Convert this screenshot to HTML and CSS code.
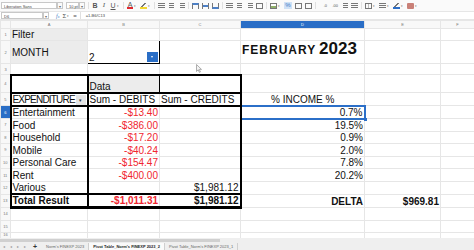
FILE: index.html
```html
<!DOCTYPE html>
<html lang="en">

<head>
  <meta charset="UTF-8">
  <title>Pivot Table_Norm's FINEXP 2023_2</title>
  <link rel="stylesheet" href="styles.css">
</head>

<body>
  <div class="app">
    <!-- toolbar -->
    <div class="toolbar">
      <span class="combo font-name">Liberation Sans</span><span class="dd">▾</span>
      <span class="combo font-size">10 pt</span><span class="dd">▾</span>
      <span class="sep"></span>
      <span class="tb-txt bold">B</span>
      <span class="tb-txt ital">I</span>
      <span class="tb-txt under">U</span><span class="arr">▾</span>
      <span class="sep"></span>
      <span class="tb-txt font-color">A</span><span class="arr">▾</span>
      <span class="ic ic-hl"></span><span class="arr">▾</span>
      <span class="sep"></span>
      <span class="ic ic-lines al-l"></span>
      <span class="ic ic-lines al-c"></span>
      <span class="ic ic-lines al-r"></span>
      <span class="sep"></span>
      <span class="ic ic-v v-t"></span>
      <span class="ic ic-v v-c"></span>
      <span class="ic ic-v v-b"></span>
      <span class="sep"></span>
      <span class="ic ic-lines"></span>
      <span class="ic ic-lines al-c"></span>
      <span class="ic ic-lines al-r"></span>
      <span class="ic ic-box"></span>
      <span class="sep"></span>
      <span class="ic ic-img"></span><span class="arr">▾</span>
      <span class="tb-txt pct">%</span>
      <span class="ic ic-box"></span>
      <span class="ic ic-box"></span>
      <span class="sep"></span>
      <span class="tb-txt num">.0</span>
      <span class="tb-txt num">.00</span>
      <span class="ic ic-lines al-r"></span>
      <span class="ic ic-lines"></span>
      <span class="sep"></span>
      <span class="ic ic-grid"></span><span class="arr">▾</span>
      <span class="ic ic-lines"></span><span class="arr">▾</span>
      <span class="ic ic-bc"></span><span class="arr">▾</span>
      <span class="ic ic-red"></span><span class="arr">▾</span>
    </div>

    <!-- formula bar -->
    <div class="formula-bar">
      <span class="combo name-box">D6</span><span class="dd">▾</span>
      <span class="fx">f<i>x</i></span>
      <span class="sigma">Σ</span><span class="arr">▾</span>
      <span class="eq">=</span>
      <span class="formula">=1-B6/C13</span>
    </div>

    <div class="grid-wrap">
      <table class="sheet">
        <colgroup>
          <col class="c-hd">
          <col class="c-a">
          <col class="c-b">
          <col class="c-c">
          <col class="c-d">
          <col class="c-e">
          <col class="c-f">
        </colgroup>
        <tr class="r-head">
          <th></th>
          <th>A</th>
          <th>B</th>
          <th>C</th>
          <th class="hd-sel">D</th>
          <th>E</th>
          <th>F</th>
        </tr>
        <tr class="r-1">
          <th>1</th>
          <td class="fill mid">Filter</td>
          <td></td><td></td><td></td><td></td><td></td>
        </tr>
        <tr class="r-2">
          <th>2</th>
          <td class="fill mid">MONTH</td>
          <td class="filter-box">2<span class="filter-btn"></span></td>
          <td></td>
          <td class="title"><b class="month">FEBRUARY</b> <b class="year">2023</b></td>
          <td></td><td></td>
        </tr>
        <tr class="r-3">
          <th>3</th>
          <td></td><td></td><td></td><td></td><td></td><td></td>
        </tr>
        <tr class="r-4">
          <th>4</th>
          <td class="pv-l pv-r pv-t pv-b"></td>
          <td class="fill pv-t pv-b line-r">Data</td>
          <td class="pv-r pv-t pv-b"></td>
          <td></td><td></td><td></td>
        </tr>
        <tr class="r-5">
          <th>5</th>
          <td class="pv-l pv-r pv-b field">EXPENDITURE<span class="field-btn">▾</span></td>
          <td class="pv-b">Sum - DEBITS</td>
          <td class="pv-r pv-b">Sum - CREDITS</td>
          <td class="center">% INCOME %</td>
          <td></td><td></td>
        </tr>
        <tr class="r-n">
          <th class="hd-sel">6</th>
          <td class="pv-l pv-r">Entertainment</td>
          <td class="num neg">-$13.40</td>
          <td class="pv-r"></td>
          <td class="num cur">0.7%</td>
          <td></td><td></td>
        </tr>
        <tr class="r-n">
          <th>7</th>
          <td class="pv-l pv-r">Food</td>
          <td class="num neg">-$386.00</td>
          <td class="pv-r"></td>
          <td class="num">19.5%</td>
          <td></td><td></td>
        </tr>
        <tr class="r-n">
          <th>8</th>
          <td class="pv-l pv-r">Household</td>
          <td class="num neg">-$17.20</td>
          <td class="pv-r"></td>
          <td class="num">0.9%</td>
          <td></td><td></td>
        </tr>
        <tr class="r-n">
          <th>9</th>
          <td class="pv-l pv-r">Mobile</td>
          <td class="num neg">-$40.24</td>
          <td class="pv-r"></td>
          <td class="num">2.0%</td>
          <td></td><td></td>
        </tr>
        <tr class="r-n">
          <th>10</th>
          <td class="pv-l pv-r">Personal Care</td>
          <td class="num neg">-$154.47</td>
          <td class="pv-r"></td>
          <td class="num">7.8%</td>
          <td></td><td></td>
        </tr>
        <tr class="r-n">
          <th>11</th>
          <td class="pv-l pv-r">Rent</td>
          <td class="num neg">-$400.00</td>
          <td class="pv-r"></td>
          <td class="num">20.2%</td>
          <td></td><td></td>
        </tr>
        <tr class="r-n">
          <th>12</th>
          <td class="pv-l pv-r">Various</td>
          <td></td>
          <td class="num pv-r">$1,981.12</td>
          <td></td><td></td><td></td>
        </tr>
        <tr class="r-n">
          <th>13</th>
          <td class="pv-l pv-r pv-t pv-bb strong">Total Result</td>
          <td class="num neg strong pv-t pv-bb">-$1,011.31</td>
          <td class="num strong pv-r pv-t pv-bb">$1,981.12</td>
          <td class="num strong">DELTA</td>
          <td class="num strong">$969.81</td>
          <td></td>
        </tr>
        <tr class="r-n">
          <th>14</th>
          <td></td><td></td><td></td><td></td><td></td><td></td>
        </tr>
        <tr class="r-n">
          <th>15</th>
          <td></td><td></td><td></td><td></td><td></td><td></td>
        </tr>
        <tr class="r-n">
          <th class="top">16</th>
          <td></td><td></td><td></td><td></td><td></td><td></td>
        </tr>
      </table>
    </div>

    <div class="hscroll"><div class="thumb"></div></div>

    <div class="tabs">
      <span class="nav">◂</span><span class="nav">◂</span><span class="nav">▸</span><span class="nav">▸</span>
      <span class="add">+</span>
      <span class="tab first">Norm's FINEXP 2023</span>
      <span class="tab active">Pivot Table_Norm's FINEXP 2023_2</span>
      <span class="tab">Pivot Table_Norm's FINEXP 2023_1</span>
    </div>

    <!-- mouse pointer over the sheet -->
    <svg class="cursor" width="6" height="9" viewBox="0 0 6 9">
      <path d="M0.5 0.5 L0.5 7.5 L2.2 5.8 L3.4 8.4 L4.4 8 L3.3 5.4 L5.5 5.4 Z" fill="#f4f4f4" stroke="#9a9a9a" stroke-width="0.8"/>
    </svg>
  </div>
</body>

</html>
```

FILE: styles.css
```css
body {
  margin: 0;
  font-family: "Liberation Sans", Arial, sans-serif;
  background-color: #fff;
}

.app {
  position: relative;
  width: 474px;
  height: 250px;
  overflow: hidden;
}

/* toolbar */
.toolbar {
  height: 11px;
  display: flex;
  align-items: center;
  gap: 3px;
  background-color: #fafafa;
  color: #555;
  overflow: hidden;
}

.combo {
  height: 7px;
  line-height: 7px;
  font-size: 4px;
  color: #444;
  background-color: #fff;
  border: 1px solid #c8c8c8;
  padding-left: 2px;
  box-sizing: border-box;
}

.font-name {
  width: 56px;
  margin-left: 1px;
}

.font-size {
  width: 13px;
}

.dd {
  width: 6px;
  height: 7px;
  font-size: 4px;
  line-height: 7px;
  text-align: center;
  color: #666;
  border: 1px solid #c8c8c8;
  box-sizing: border-box;
  margin-left: -3px;
}

.arr {
  width: 3px;
  font-size: 3px;
  color: #666;
  margin-left: -2px;
}

.sep {
  width: 1px;
  height: 7px;
  background-color: #e0e0e0;
}

.tb-txt {
  width: 6px;
  font-size: 7px;
  line-height: 7px;
  text-align: center;
  color: #555;
}

.bold {
  font-weight: bold;
}

.ital {
  font-style: italic;
  font-family: "Liberation Serif", serif;
}

.under {
  text-decoration: underline;
}

.font-color {
  border-bottom: 2px solid #e0282e;
  line-height: 5px;
}

.pct {
  width: 8px;
  font-size: 6px;
  color: #3c76c4;
  background-color: #cfe1f6;
}

.num {
  width: 8px;
  font-size: 4px;
}

.ic {
  width: 7px;
  height: 6px;
  display: inline-block;
  box-sizing: border-box;
}

.ic-lines {
  background: repeating-linear-gradient(#777 0 1px, transparent 1px 2px);
}

.al-c {
  background: repeating-linear-gradient(#777 0 1px, transparent 1px 2px) center / 5px 6px no-repeat;
}

.al-r {
  background: repeating-linear-gradient(#777 0 1px, transparent 1px 2px) right / 5px 6px no-repeat;
}

.ic-v {
  border-left: 1px solid #777;
  border-right: 1px solid #777;
}

.v-t {
  border-top: 2px solid #4b7fc6;
}

.v-c {
  background: linear-gradient(transparent 2px, #4b7fc6 2px 4px, transparent 4px);
}

.v-b {
  border-bottom: 2px solid #4b7fc6;
}

.ic-box {
  border: 1px solid #777;
}

.ic-hl {
  border-bottom: 2px solid #f1d630;
  background: linear-gradient(135deg, transparent 40%, #777 40% 60%, transparent 60%);
}

.ic-img {
  border: 1px solid #777;
  background: linear-gradient(#fff 50%, #8fb06a 50%);
}

.ic-grid {
  border: 1px solid #777;
  background: linear-gradient(90deg, transparent 2px, #bbb 2px 3px, transparent 3px);
}

.ic-bc {
  border-bottom: 2px solid #2d6ec6;
  background: linear-gradient(135deg, transparent 40%, #777 40% 60%, transparent 60%);
}

.ic-red {
  background-color: #c98078;
  border-radius: 1px;
}

/* formula bar */
.formula-bar {
  height: 9px;
  display: flex;
  align-items: center;
  gap: 3px;
  border-top: 1px solid #e6e6e6;
  border-bottom: 1px solid #e6e6e6;
  box-sizing: border-box;
  color: #555;
}

.name-box {
  width: 42px;
  margin-left: 1px;
}

.fx {
  margin-left: 4px;
  font-size: 6px;
  font-style: italic;
  font-family: "Liberation Serif", serif;
  color: #4b7fc6;
}

.fx i {
  font-size: 4px;
}

.sigma {
  font-size: 6px;
}

.eq {
  font-size: 6px;
}

.formula {
  flex: 1;
  height: 7px;
  line-height: 7px;
  font-size: 4px;
  color: #444;
  border-left: 1px solid #e0e0e0;
  padding-left: 5px;
}

/* sheet */
.grid-wrap {
  height: 218px;
  overflow: hidden;
}

.sheet {
  width: 474px;
  table-layout: fixed;
  border-collapse: collapse;
}

.c-hd {
  width: 10px;
}

.c-a {
  width: 77px;
}

.c-b {
  width: 72px;
}

.c-c {
  width: 81px;
}

.c-d {
  width: 124px;
}

.c-e {
  width: 76px;
}

.c-f {
  width: 34px;
}

.sheet td,
.sheet th {
  padding: 0 1px;
  border: 1px solid #e6e6e6;
  white-space: nowrap;
  overflow: hidden;
}

.sheet td {
  font-size: 10px;
  line-height: 11px;
  color: #111;
  vertical-align: bottom;
}

.sheet th {
  font-size: 4px;
  font-weight: normal;
  color: #777;
  background-color: #f8f8f8;
  text-align: center;
  vertical-align: middle;
  line-height: 5px;
}

.sheet th.hd-sel {
  background-color: #2a6ec6;
  color: #fff;
}

.sheet th.top {
  vertical-align: top;
  line-height: 4px;
}

.r-head {
  height: 8px;
}

.r-1 {
  height: 12px;
}

.r-2 {
  height: 22px;
}

.r-3 {
  height: 11px;
}

.r-4 {
  height: 18px;
}

.r-5 {
  height: 13px;
}

.r-n {
  height: 12.6px;
}

.fill {
  background-color: #ececec;
}

.mid {
  vertical-align: middle !important;
}

.center {
  text-align: center;
}

.num {
  text-align: right;
}

.neg {
  color: #f0262f !important;
}

.strong {
  font-weight: bold;
}

/* pivot table frame */
.pv-t {
  border-top: 2px solid #000 !important;
}

.pv-b {
  border-bottom: 2px solid #000 !important;
}

.pv-bb {
  border-bottom: 3px solid #000 !important;
}

.pv-l {
  border-left: 2px solid #000 !important;
}

.pv-r {
  border-right: 2px solid #000 !important;
}

.line-r {
  border-right: 1px solid #000 !important;
}

.field {
  position: relative;
  letter-spacing: -0.8px;
}

.field-btn {
  position: absolute;
  right: 1px;
  top: 1px;
  width: 10px;
  height: 10px;
  font-size: 5px;
  line-height: 10px;
  letter-spacing: 0;
  text-align: center;
  color: #333;
  background-color: #e4e4e4;
}

.filter-box {
  position: relative;
  border: 1px solid #000 !important;
  vertical-align: bottom;
}

.filter-btn {
  position: absolute;
  right: 1px;
  bottom: 1px;
  width: 11px;
  height: 10px;
  background-color: #2a6ec6;
}

.filter-btn::after {
  content: "";
  position: absolute;
  left: 4px;
  top: 4px;
  border-left: 1.5px solid transparent;
  border-right: 1.5px solid transparent;
  border-top: 2px solid #fff;
}

.title {
  vertical-align: bottom;
  padding-bottom: 4px !important;
  line-height: 16px !important;
}

.month {
  font-size: 12px;
  letter-spacing: 1px;
}

.year {
  font-size: 17px;
}

.cur {
  position: relative;
  overflow: visible !important;
  border: 2px solid #2b6fc8 !important;
}

.cur::after {
  content: "";
  position: absolute;
  right: -3px;
  bottom: -3px;
  width: 3px;
  height: 3px;
  background-color: #2b6fc8;
}

/* bottom bars */
.hscroll {
  height: 5px;
  padding-top: 1px;
  box-sizing: border-box;
  background-color: #efefef;
}

.thumb {
  width: 220px;
  height: 3px;
  background-color: #d0d0d0;
}

.tabs {
  height: 7px;
  display: flex;
  align-items: center;
  font-size: 4px;
  color: #666;
  background-color: #efefef;
}

.nav {
  width: 7px;
  text-align: center;
  color: #999;
}

.add {
  margin-left: 5px;
  font-size: 7px;
  font-weight: bold;
  color: #333;
}

.tab {
  padding: 0 4px;
  height: 7px;
  line-height: 7px;
  border-right: 1px solid #cfcfcf;
}

.tab.first {
  margin-left: 5px;
}

.tab.active {
  font-weight: bold;
  color: #222;
  background-color: #fafafa;
}

.cursor {
  position: absolute;
  left: 196px;
  top: 64px;
}
```
